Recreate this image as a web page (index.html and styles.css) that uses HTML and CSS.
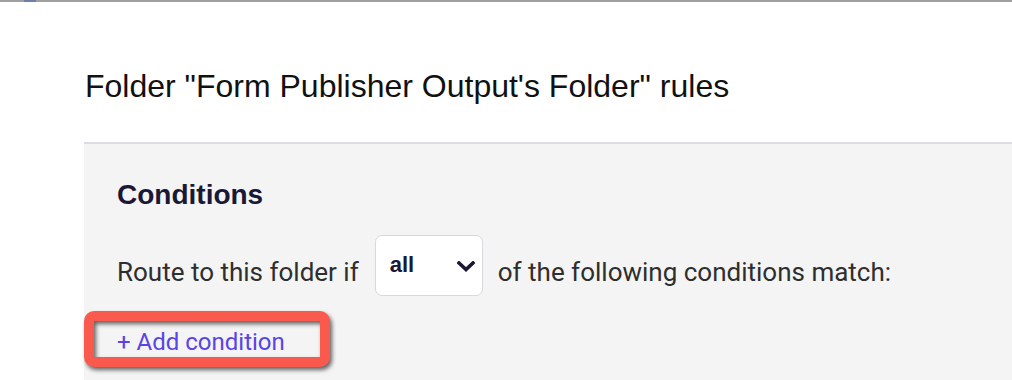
FILE: index.html
```html
<!DOCTYPE html>
<html lang="en">
<head>
<meta charset="utf-8">
<title>Folder rules</title>
<link rel="stylesheet" href="styles.css">
</head>
<body>
<div class="topbar"><span class="topbar-tab"></span></div>
<main class="page">
  <h1 class="title">Folder "Form Publisher Output's Folder" rules</h1>
  <section class="panel">
    <h2 class="panel-heading">Conditions</h2>
    <div class="route-row">
      <span class="route-text">Route to this folder if</span>
      <div class="select">
        <span class="select-value">all</span>
        <svg class="chevron" width="18" height="11" viewBox="0 0 18 11" aria-hidden="true">
          <path d="M2 2 L9 8.5 L16 2" fill="none" stroke="#1b1736" stroke-width="3.6" stroke-linecap="square" stroke-linejoin="miter"/>
        </svg>
      </div>
      <span class="route-text">of the following conditions match:</span>
    </div>
    <div class="add-row">
      <a class="add-link" href="#">+ Add condition</a>
    </div>
  </section>
</main>
</body>
</html>
```

FILE: styles.css
```css
html, body {
  margin: 0;
  padding: 0;
  background: #ffffff;
}

body {
  font-family: "Liberation Sans", Arial, sans-serif;
  height: 380px;
  overflow: hidden;
}

.topbar {
  height: 2px;
  background: #9f9f9f;
  display: flex;
}

.topbar-tab {
  width: 12px;
  margin-left: 24px;
  background: #6b7fa8;
}

.page {
  padding-left: 84px;
}

.title {
  margin: 66px 0 0 1px;
  font-family: "Liberation Sans", Arial, sans-serif;
  font-weight: 400;
  font-size: 32px;
  line-height: 36px;
  color: #111111;
}

.panel {
  margin-top: 38px;
  border-top: 2px solid #dcdce2;
  background: #f4f4f4;
  padding: 35px 0 40px 33px;
}

.panel-heading {
  margin: 0;
  font-family: "Liberation Sans", Arial, sans-serif;
  font-weight: 700;
  font-size: 28px;
  line-height: 32px;
  color: #1b1736;
}

.route-row {
  display: flex;
  align-items: flex-start;
  margin-top: 24px;
}

.route-text {
  font-family: Roboto, "Liberation Sans", sans-serif;
  font-size: 26px;
  line-height: 30px;
  color: #2e2e2e;
  margin-top: 22px;
}

.select {
  width: 108px;
  height: 61px;
  box-sizing: border-box;
  margin: 0 15px 0 16px;
  background: #ffffff;
  border: 1px solid #d8d8de;
  border-radius: 7px;
  display: flex;
  justify-content: space-between;
  align-items: flex-start;
  padding: 0 7px 0 14px;
}

.select-value {
  font-family: "Liberation Sans", Arial, sans-serif;
  font-weight: 700;
  font-size: 22px;
  line-height: 24px;
  color: #1b1736;
  margin-top: 17px;
}

.chevron {
  display: block;
  margin-top: 25px;
}

.add-row {
  margin-top: 32px;
  display: flex;
}

.add-link {
  position: relative;
  font-family: Roboto, "Liberation Sans", sans-serif;
  font-size: 24px;
  line-height: 28px;
  color: #5b43e6;
  text-decoration: none;
}

.add-link::after {
  content: "";
  position: absolute;
  top: -17px;
  bottom: -11px;
  left: -33px;
  right: -45px;
  border: 10px solid #fa5a4e;
  border-radius: 10px;
  filter: drop-shadow(2px 3px 2px rgba(0, 0, 0, 0.6));
  pointer-events: none;
}
```
